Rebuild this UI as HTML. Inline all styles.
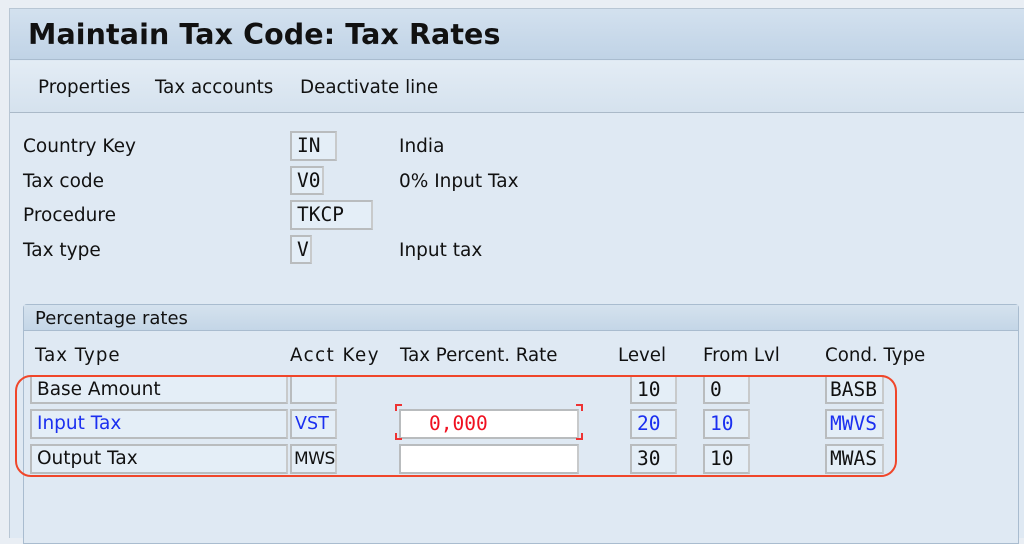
<!DOCTYPE html>
<html><head><style>
*{margin:0;padding:0;box-sizing:border-box}
body{width:1024px;height:533px;background:#e9eef4;position:relative;overflow:hidden;font-family:"DejaVu Sans","Liberation Sans",sans-serif;color:#111}
.a{position:absolute}
.main{left:9px;top:8px;width:1020px;height:530px;background:#dfe9f3;border-left:1px solid #b8c6d4;border-top:1px solid #b8c6d4}
.title{left:10px;top:9px;width:1014px;height:51px;background:linear-gradient(#d3e1ef,#c0d3e6);border-bottom:1px solid #a9bccf}
.title span{position:absolute;left:18px;top:9px;font-size:28.5px;font-weight:bold;letter-spacing:0.1px}
.tb{left:10px;top:61px;width:1014px;height:52px;background:linear-gradient(#e3ecf5,#d5e2ee);border-bottom:1px solid #aab9c8}
.tb span{position:absolute;top:16px;font-size:18.3px}
.lbl{font-size:18.5px}
.in{background:#e4eef7;border:2px solid #b9bcbe;border-right-color:#c8cacb;font-family:"DejaVu Sans Mono","Liberation Mono",monospace;font-size:19.5px;padding-left:5px;line-height:26px}
.sans{font-family:"DejaVu Sans","Liberation Sans",sans-serif;font-size:18.5px}
.w{background:#fff}
.blue{color:#1b2ff0}
.grp{left:23px;top:304px;width:996px;height:240px;border:1px solid #a9bccf;border-radius:4px 4px 0 0;background:#dfe9f3}
.gh{left:24px;top:305px;width:994px;height:26px;background:linear-gradient(#d5e2ee,#c4d6e7);border-bottom:1px solid #a9bccf}
.hd{font-size:18.2px;top:345px}
</style></head><body>
<div class="a main"></div>
<div class="a title"><span>Maintain Tax Code: Tax Rates</span></div>
<div class="a tb"><span style="left:28px">Properties</span><span style="left:145px">Tax accounts</span><span style="left:290px">Deactivate line</span></div>

<div class="a lbl" style="left:23px;top:136px">Country Key</div>
<div class="a lbl" style="left:23px;top:171px">Tax code</div>
<div class="a lbl" style="left:23px;top:205px">Procedure</div>
<div class="a lbl" style="left:23px;top:240px">Tax type</div>
<div class="a in" style="left:290px;top:131px;width:47px;height:30px">IN</div>
<div class="a in" style="left:290px;top:166px;width:34px;height:29px">V0</div>
<div class="a in" style="left:290px;top:200px;width:83px;height:30px">TKCP</div>
<div class="a in" style="left:290px;top:235px;width:22px;height:29px">V</div>
<div class="a lbl" style="left:399px;top:136px">India</div>
<div class="a lbl" style="left:399px;top:171px">0% Input Tax</div>
<div class="a lbl" style="left:399px;top:240px">Input tax</div>

<div class="a grp"></div>
<div class="a gh"><span style="position:absolute;left:11px;top:3px;font-size:18px">Percentage rates</span></div>
<div class="a hd" style="left:35px;letter-spacing:1px">Tax Type</div>
<div class="a hd" style="left:290px;letter-spacing:1.5px">Acct Key</div>
<div class="a hd" style="left:400px">Tax Percent. Rate</div>
<div class="a hd" style="left:618px">Level</div>
<div class="a hd" style="left:703px">From Lvl</div>
<div class="a hd" style="left:825px">Cond. Type</div>

<div class="a in sans" style="left:30px;top:375px;width:258px;height:29px">Base Amount</div>
<div class="a in blue sans" style="left:30px;top:409px;width:258px;height:30px">Input Tax</div>
<div class="a in sans" style="left:30px;top:444px;width:258px;height:30px">Output Tax</div>
<div class="a in" style="left:290px;top:375px;width:47px;height:29px"></div>
<div class="a in blue sans" style="left:290px;top:409px;width:47px;height:30px;padding-left:3px;font-size:17.5px">VST</div>
<div class="a in sans" style="left:290px;top:444px;width:47px;height:30px;padding-left:2px;font-size:17px;letter-spacing:-0.5px">MWS</div>
<div class="a in w" style="left:399px;top:409px;width:180px;height:30px;color:#f01020;padding-left:28px">0,000</div>
<div class="a in w" style="left:399px;top:444px;width:180px;height:30px"></div>
<div class="a" style="left:395px;top:404px;width:7px;height:7px;border-left:2px solid #e33;border-top:2px solid #e33"></div>
<div class="a" style="left:576px;top:404px;width:7px;height:7px;border-right:2px solid #e33;border-top:2px solid #e33"></div>
<div class="a" style="left:395px;top:433px;width:7px;height:7px;border-left:2px solid #e33;border-bottom:2px solid #e33"></div>
<div class="a" style="left:576px;top:433px;width:7px;height:7px;border-right:2px solid #e33;border-bottom:2px solid #e33"></div>
<div class="a in" style="left:630px;top:375px;width:47px;height:29px">10</div>
<div class="a in blue" style="left:630px;top:409px;width:47px;height:30px">20</div>
<div class="a in" style="left:630px;top:444px;width:47px;height:30px">30</div>
<div class="a in" style="left:703px;top:375px;width:47px;height:29px">0</div>
<div class="a in blue" style="left:703px;top:409px;width:47px;height:30px">10</div>
<div class="a in" style="left:703px;top:444px;width:47px;height:30px">10</div>
<div class="a in" style="left:825px;top:375px;width:59px;height:29px;padding-left:3px">BASB</div>
<div class="a in blue" style="left:825px;top:409px;width:59px;height:30px;padding-left:3px">MWVS</div>
<div class="a in" style="left:825px;top:444px;width:59px;height:30px;padding-left:3px">MWAS</div>

<div class="a" style="left:15px;top:375px;width:882px;height:102px;border:2px solid #f0462a;border-radius:16px"></div>
</body></html>
